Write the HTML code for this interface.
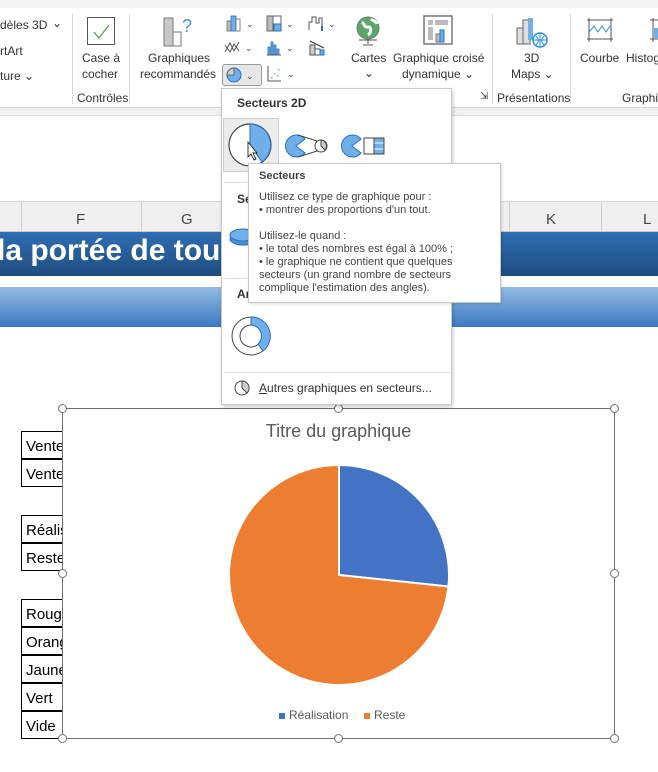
<!DOCTYPE html>
<html><head><meta charset="utf-8"><style>
*{margin:0;padding:0;box-sizing:border-box}
body{width:658px;height:772px;overflow:hidden;background:#fff;font-family:"Liberation Sans",sans-serif;position:relative;color:#333}
.a{position:absolute}
.t{font-size:12px;color:#333;white-space:nowrap}
.sep{position:absolute;width:1px;background:#dadada}
.cell{position:absolute;left:21px;width:45px;height:28px;border:1px solid #000;border-right:none;font-size:15px;color:#000;padding:6px 0 0 4px;overflow:hidden;white-space:nowrap;background:#fff}
.hd{position:absolute;width:9px;height:9px;border:1.5px solid #707070;border-radius:50%;background:#fff}
</style></head><body>
<!-- ribbon -->
<div class="a" style="left:0;top:0;width:658px;height:8px;background:#f3f3f3"></div>
<div class="a" style="left:0;top:8px;width:658px;height:100px;background:#fff;border-bottom:1px solid #d4d4d4"></div>
<div class="a" style="left:0;top:108px;width:658px;height:8px;background:#f0f0f0;border-bottom:1px solid #dcdcdc"></div>
<div class="a t" style="left:0;top:18px">dèles 3D</div><div class="a t" style="left:52px;top:16px">⌄</div>
<div class="a t" style="left:0;top:44px">rtArt</div>
<div class="a t" style="left:0;top:69px">ture ⌄</div>
<div class="sep" style="left:72px;top:14px;height:90px"></div>
<div class="a" style="left:87px;top:17px;width:28px;height:28px;border:1px solid #555;background:#fff"><svg width="26" height="26"><path d="M6 14 L11 20 L21 7" fill="none" stroke="#5a9e5a" stroke-width="1.3"/></svg></div>
<div class="a t" style="left:82px;top:51px">Case à</div>
<div class="a t" style="left:82px;top:67px">cocher</div>
<div class="a t" style="left:77px;top:91px">Contrôles</div>
<div class="sep" style="left:129px;top:14px;height:90px"></div>
<svg class="a" style="left:160px;top:14px" width="36" height="34"><rect x="4" y="4" width="9" height="28" fill="#c8c8c8" stroke="#777"/><rect x="13" y="18" width="8" height="14" fill="#fff" stroke="#777"/><text x="22" y="18" font-size="18" fill="#4a90d6" font-family="Liberation Sans">?</text></svg>
<div class="a t" style="left:148px;top:51px">Graphiques</div>
<div class="a t" style="left:140px;top:67px">recommandés</div>
<svg class="a" style="left:226px;top:14px" width="30" height="20"><rect x="1" y="7" width="4" height="10" fill="#bbb" stroke="#666" stroke-width=".8"/><rect x="5" y="2" width="5" height="15" fill="#6fb0ea" stroke="#2a6fb8" stroke-width=".8"/><rect x="10" y="5" width="4" height="12" fill="#fff" stroke="#666" stroke-width=".8"/><text x="20" y="13" font-size="9" fill="#444">⌄</text></svg>
<svg class="a" style="left:266px;top:14px" width="30" height="20"><rect x="1" y="2" width="14" height="15" fill="#fff" stroke="#666"/><rect x="1" y="2" width="6" height="15" fill="#bbb" stroke="#666"/><rect x="8" y="10" width="7" height="7" fill="#6fb0ea" stroke="#2a6fb8"/><text x="20" y="13" font-size="9" fill="#444">⌄</text></svg>
<svg class="a" style="left:308px;top:14px" width="30" height="20"><path d="M1 16V8h3V3h4v6h3V4h3v12" fill="none" stroke="#555"/><path d="M14 12v5" stroke="#2a6fb8" stroke-width="2"/><text x="20" y="13" font-size="9" fill="#444">⌄</text></svg>
<svg class="a" style="left:224px;top:38px" width="30" height="20"><path d="M1 14L6 5 10 13 15 4M1 7 6 14 10 6 15 13" fill="none" stroke="#555" stroke-width="1"/><text x="21" y="13" font-size="9" fill="#444">⌄</text></svg>
<svg class="a" style="left:266px;top:38px" width="30" height="20"><path d="M2 17V9h2v8M5 17V4h2v13M8 17V7h2v10M11 17v-6h2v6" fill="#6fb0ea" stroke="#2a6fb8" stroke-width=".8"/><path d="M1 17h14" stroke="#555"/><text x="20" y="13" font-size="9" fill="#444">⌄</text></svg>
<svg class="a" style="left:308px;top:38px" width="24" height="20"><rect x="2" y="7" width="5" height="10" fill="#ccc" stroke="#555"/><rect x="7" y="11" width="5" height="6" fill="#fff" stroke="#555"/><rect x="12" y="12" width="4" height="5" fill="#6fb0ea" stroke="#2a6fb8"/><path d="M2 3 L16 10" stroke="#333"/></svg>
<div class="a" style="left:222px;top:64px;width:40px;height:22px;border:1px solid #999;border-radius:3px;background:#e6e6e6"></div>
<svg class="a" style="left:225px;top:66px" width="36" height="18"><circle cx="9" cy="9" r="7" fill="#6fb0ea" stroke="#2a6fb8"/><path d="M9 9V2A7 7 0 0 0 2 9Z" fill="#ccc" stroke="#555" stroke-width=".8"/><text x="21" y="13" font-size="9" fill="#444">⌄</text></svg>
<svg class="a" style="left:266px;top:64px" width="30" height="20"><path d="M2 2V17H15" fill="none" stroke="#555"/><g fill="#6fb0ea"><rect x="5" y="13" width="1.5" height="1.5"/><rect x="8" y="9" width="1.5" height="1.5"/><rect x="11" y="11" width="1.5" height="1.5"/><rect x="12" y="5" width="1.5" height="1.5"/></g><text x="21" y="13" font-size="9" fill="#444">⌄</text></svg>
<svg class="a" style="left:353px;top:14px" width="30" height="34"><circle cx="15" cy="14" r="11" fill="#5aa868" stroke="#777"/><path d="M9 8c3 2 2 6 6 5s3 6 0 8M18 5c2 2 5 2 6 5" stroke="#fff" stroke-width="3" fill="none"/><path d="M6 26h18M15 25v5M10 31h10" stroke="#555"/></svg>
<div class="a t" style="left:351px;top:51px">Cartes</div>
<div class="a t" style="left:364px;top:66px">⌄</div>
<svg class="a" style="left:422px;top:14px" width="34" height="34"><rect x="2" y="2" width="28" height="28" fill="#fff" stroke="#777" stroke-width="1.5"/><rect x="6" y="6" width="5" height="5" fill="#bbb"/><rect x="13" y="6" width="13" height="5" fill="#bbb"/><rect x="6" y="13" width="5" height="13" fill="#bbb"/><rect x="14" y="20" width="4" height="8" fill="#bbb" stroke="#777"/><rect x="18" y="16" width="4" height="12" fill="#6fb0ea" stroke="#2a6fb8"/></svg>
<div class="a t" style="left:393px;top:51px">Graphique croisé</div>
<div class="a t" style="left:402px;top:67px">dynamique ⌄</div>
<div class="a t" style="left:480px;top:91px;font-size:10px">⇲</div>
<div class="sep" style="left:492px;top:14px;height:90px"></div>
<svg class="a" style="left:515px;top:16px" width="36" height="32"><rect x="2" y="12" width="6" height="16" fill="#ddd" stroke="#666"/><rect x="8" y="4" width="7" height="24" fill="#ddd" stroke="#666"/><rect x="13" y="2" width="5" height="22" fill="#6fb0ea"/><circle cx="25" cy="24" r="7" fill="#fff" stroke="#2a8fd6" stroke-width="1.5"/><path d="M18 24h14M25 17v14M21 20c3 3 3 6 0 9M29 20c-3 3-3 6 0 9" stroke="#2a8fd6" fill="none"/></svg>
<div class="a t" style="left:524px;top:51px">3D</div>
<div class="a t" style="left:511px;top:67px">Maps ⌄</div>
<div class="a t" style="left:497px;top:91px">Présentations</div>
<div class="sep" style="left:570px;top:14px;height:90px"></div>
<svg class="a" style="left:585px;top:18px" width="32" height="24"><path d="M2 2h26M2 21h26M4 0v24M26 0v24" stroke="#555"/><path d="M4 14l5-6 4 6 4-6 4 6 4-6" fill="none" stroke="#2a8fd6"/></svg>
<div class="a t" style="left:580px;top:51px">Courbe</div>
<svg class="a" style="left:650px;top:18px" width="10" height="24"><path d="M3 0v24M0 2h10M0 21h10" stroke="#555"/><rect x="4" y="10" width="5" height="10" fill="#6fb0ea"/></svg>
<div class="a t" style="left:626px;top:51px">Histogr</div>
<div class="a t" style="left:622px;top:91px">Graphiq</div>
<!-- column headers -->
<div class="a" style="left:0;top:201px;width:658px;height:31px;background:#efefef;border-top:1px solid #d4d4d4;border-bottom:1px solid #c8c8c8"></div>
<div class="sep" style="left:21px;top:202px;height:29px;background:#d0d0d0"></div>
<div class="sep" style="left:141px;top:202px;height:29px;background:#d0d0d0"></div>
<div class="sep" style="left:509px;top:202px;height:29px;background:#d0d0d0"></div>
<div class="sep" style="left:601px;top:202px;height:29px;background:#d0d0d0"></div>
<div class="a" style="left:76px;top:211px;font-size:15px;color:#444">F</div>
<div class="a" style="left:181px;top:211px;font-size:15px;color:#444">G</div>
<div class="a" style="left:546px;top:211px;font-size:15px;color:#444">K</div>
<div class="a" style="left:643px;top:211px;font-size:15px;color:#444">L</div>
<!-- banners -->
<div class="a" style="left:0;top:232px;width:658px;height:44px;background:linear-gradient(#2f6eb2,#1e4d80)"></div>
<div class="a" style="left:-3px;top:234px;font-size:30px;font-weight:bold;color:#fff;white-space:nowrap">la portée de tou</div>
<div class="a" style="left:0;top:287px;width:658px;height:40px;background:linear-gradient(#93bae2,#3b79c2)"></div>
<!-- table cells -->
<div class="cell" style="top:431px">Vente</div>
<div class="cell" style="top:459px">Vente</div>
<div class="cell" style="top:515px">Réalis</div>
<div class="cell" style="top:543px">Reste</div>
<div class="cell" style="top:599px">Rouge</div>
<div class="cell" style="top:627px">Orang</div>
<div class="cell" style="top:655px">Jaune</div>
<div class="cell" style="top:683px">Vert</div>
<div class="cell" style="top:711px">Vide</div>
<!-- chart -->
<div class="a" style="left:62px;top:408px;width:553px;height:331px;border:1.5px solid #707070;background:#fff"></div>
<div class="a" style="left:62px;top:421px;width:553px;text-align:center;font-size:18px;color:#595959">Titre du graphique</div>
<svg class="a" style="left:0;top:0" width="658" height="772">
<path d="M339 575 L339 465 A110 110 0 0 1 448.4 586.5 Z" fill="#4472c4" stroke="#fff" stroke-width="2"/>
<path d="M339 575 L448.4 586.5 A110 110 0 1 1 339 465 Z" fill="#ed7d31" stroke="#fff" stroke-width="2"/>
</svg>
<div class="a" style="left:279px;top:713px;width:6px;height:6px;background:#4472c4"></div>
<div class="a" style="left:289px;top:708px;font-size:12px;color:#595959">Réalisation</div>
<div class="a" style="left:364px;top:713px;width:6px;height:6px;background:#ed7d31"></div>
<div class="a" style="left:374px;top:708px;font-size:12px;color:#595959">Reste</div>
<div class="hd" style="left:58px;top:404px"></div><div class="hd" style="left:334px;top:404px"></div><div class="hd" style="left:610px;top:404px"></div>
<div class="hd" style="left:58px;top:569px"></div><div class="hd" style="left:610px;top:569px"></div>
<div class="hd" style="left:58px;top:734px"></div><div class="hd" style="left:334px;top:734px"></div><div class="hd" style="left:610px;top:734px"></div>
<!-- dropdown -->
<div class="a" style="left:221px;top:88px;width:231px;height:317px;background:#fff;border:1px solid #c8c8c8;box-shadow:1px 2px 4px rgba(0,0,0,.2)"></div>
<div class="a" style="left:237px;top:96px;font-size:12px;font-weight:bold;color:#333">Secteurs 2D</div>
<div class="a" style="left:223px;top:118px;width:56px;height:54px;background:#ececec;border:1px solid #ccc"></div>
<svg class="a" style="left:221px;top:110px" width="180" height="68">
<circle cx="29" cy="35" r="21" fill="#fff" stroke="#444" stroke-width="1.2"/>
<path d="M29 35V14A21 21 0 0 1 41 52Z" fill="#6fb0ea" stroke="#2a6fb8"/>
<path d="M27 32v15l3-3 3 6 2-1-3-6h4Z" fill="#fff" stroke="#222" stroke-width=".9"/>
<path d="M75 36 L84 29 A11 11 0 1 0 84 43 Z" fill="#6fb0ea" stroke="#2a6fb8"/>
<path d="M77 25L96 31M77 47L96 41" stroke="#444"/>
<circle cx="100" cy="36" r="6" fill="#fff" stroke="#444"/><path d="M100 36V30A6 6 0 0 1 104 40Z" fill="#ccc" stroke="#444"/>
<path d="M131 36 L140 29 A11 11 0 1 0 140 43 Z" fill="#6fb0ea" stroke="#2a6fb8"/>
<rect x="143" y="28" width="20" height="16" fill="#fff" stroke="#444"/><path d="M153 28v16" stroke="#444"/><rect x="153" y="28" width="10" height="16" fill="#6fb0ea" stroke="#444"/><path d="M153 33h10M153 39h10" stroke="#fff"/><rect x="153" y="28" width="10" height="16" fill="none" stroke="#444"/>
</svg>
<div class="a" style="left:224px;top:182px;width:226px;height:1px;background:#e0e0e0"></div>
<div class="a" style="left:237px;top:192px;font-size:12px;font-weight:bold;color:#333">Se</div>
<svg class="a" style="left:228px;top:222px" width="30" height="30"><ellipse cx="15" cy="17" rx="13" ry="6" fill="#4a90d6" stroke="#2a6fb8"/><ellipse cx="15" cy="13" rx="13" ry="6" fill="#6fb0ea" stroke="#2a6fb8"/></svg>
<div class="a" style="left:224px;top:278px;width:226px;height:1px;background:#e0e0e0"></div>
<div class="a" style="left:237px;top:287px;font-size:12px;font-weight:bold;color:#333">Ar</div>
<svg class="a" style="left:226px;top:310px" width="50" height="52"><circle cx="25" cy="26" r="19" fill="none" stroke="#444" stroke-width="1"/><circle cx="25" cy="26" r="11" fill="none" stroke="#444"/><path d="M25 7A19 19 0 0 1 37 41L32 34A11 11 0 0 0 25 15Z" fill="#6fb0ea" stroke="#2a6fb8"/></svg>
<div class="a" style="left:224px;top:372px;width:226px;height:1px;background:#e0e0e0"></div>
<svg class="a" style="left:234px;top:380px" width="18" height="18"><circle cx="8" cy="8" r="7" fill="#fff" stroke="#444"/><path d="M8 8V1A7 7 0 0 1 13 13Z" fill="#ccc" stroke="#444"/></svg>
<div class="a" style="left:259px;top:381px;font-size:12px;color:#333"><u>A</u>utres graphiques en secteurs...</div>
<!-- tooltip -->
<div class="a" style="left:248px;top:163px;width:253px;height:140px;background:#fff;border:1px solid #c8c8c8;box-shadow:1px 1px 3px rgba(0,0,0,.15)"></div>
<div class="a" style="left:259px;top:170px;font-size:11px;font-weight:bold;color:#444">Secteurs</div>
<div class="a" style="left:259px;top:191px;font-size:11px;line-height:13px;color:#444;white-space:nowrap">Utilisez ce type de graphique pour :<br>• montrer des proportions d'un tout.<br><br>Utilisez-le quand :<br>• le total des nombres est égal à 100% ;<br>• le graphique ne contient que quelques<br>secteurs (un grand nombre de secteurs<br>complique l'estimation des angles).</div>
</body></html>
